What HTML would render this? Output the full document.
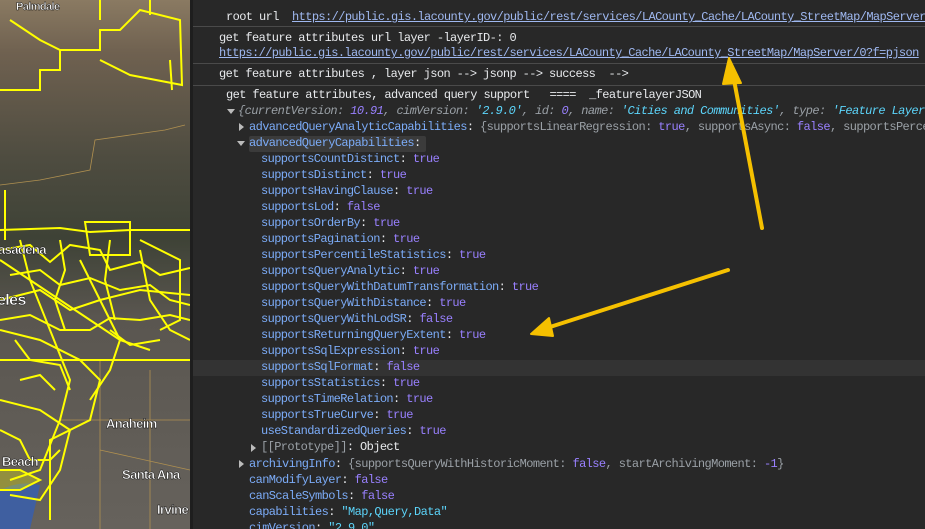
<!DOCTYPE html>
<html><head><meta charset="utf-8"><style>
*{margin:0;padding:0;box-sizing:border-box}
body{width:925px;height:529px;overflow:hidden;background:#282828;position:relative;font-family:"Liberation Mono",monospace;font-size:12px;letter-spacing:-0.6px;color:#e8eaed}
#map{position:absolute;left:0;top:0;width:190px;height:529px}
#split{position:absolute;left:190px;top:0;width:3px;height:529px;background:#1e1e1e}
#con{position:absolute;left:193px;top:0;width:732px;height:529px;overflow:hidden}
.l{position:absolute;white-space:pre;height:16px;line-height:16px}
.sep{position:absolute;left:0;right:0;height:1px;background:#4a4a4a}
.k{color:#7cacf8}.v{color:#9980ff}.s{color:#5cd5fb}.g{color:#9aa0a6}.i{font-style:italic}
a{color:#9fb8f0;text-decoration:underline}
.t{position:absolute;width:0;height:0}
.tr{border-top:4px solid transparent;border-bottom:4px solid transparent;border-left:5px solid #bbb}
.td{border-left:4px solid transparent;border-right:4px solid transparent;border-top:5px solid #bbb}
</style></head><body>
<svg id="map" viewBox="0 0 190 529" xmlns="http://www.w3.org/2000/svg">
<defs><linearGradient id="bg" x1="0" y1="0" x2="0" y2="1">
<stop offset="0" stop-color="#8a7a62"/><stop offset="0.1" stop-color="#6f6150"/><stop offset="0.3" stop-color="#4e4c40"/><stop offset="0.45" stop-color="#3e4236"/><stop offset="0.6" stop-color="#5a5650"/><stop offset="1" stop-color="#66625c"/></linearGradient></defs>
<rect width="190" height="529" fill="url(#bg)"/>
<path d="M0 490 Q20 480 40 485 L30 529 L0 529Z" fill="#3f5fa0"/>
<g fill="none" stroke="#b09050" stroke-width="0.8">
<path d="M0 185 L40 180 L90 170 L95 140 L130 135 L165 130 L185 125"/>
<path d="M100 360 L100 529 M150 370 L150 529 M60 420 L190 420 M100 450 L190 470"/>
</g>
<g fill="none" stroke="#ffff00" stroke-width="2">
<path d="M0 90 L40 90 L40 70 L60 70 L60 50 L100 50 L100 30 L120 30 L140 10 L180 20 L182 85 L130 75 L100 60"/>
<path d="M10 20 L40 40 L60 50 M100 0 L100 20 M150 0 L150 15 M170 60 L172 90"/>
<path d="M0 230 L60 228 L90 232 L130 230 L190 230 M85 222 L130 222 L130 255 L90 255Z"/>
<path d="M0 360 L190 360 M0 260 L60 300 L90 320 L120 340 L150 350 M0 300 L40 290 L70 310 L100 300 L140 290 L190 295"/>
<path d="M20 240 L30 280 L50 330 L70 380 L60 420 L40 470 L10 480 M80 260 L100 300 L120 340 L110 370 L90 400 M140 250 L150 300 L170 330 L190 340"/>
<path d="M5 190 L5 240 M0 330 L40 340 L80 360 L100 380 L90 420 L50 440 L50 520 M140 240 L180 260 L180 320 L160 330"/>
<path d="M0 400 L40 410 L70 430 L60 470 L40 500 L10 495"/>
<path d="M0 250 L30 245 L50 262 L70 245 L100 250 L110 270 L140 262 L160 275 L190 268"/>
<path d="M10 275 L40 270 L60 285 L90 278 L120 290 L150 285 L170 300 L190 305"/>
<path d="M0 320 L30 315 L60 330 L90 330 L110 318 L140 320 L170 315 L190 320"/>
<path d="M15 340 L30 360 L60 365 L70 390 M110 330 L130 345 L160 340 M60 240 L65 270 L55 300 L65 330 M110 240 L105 280 L115 320"/>
<path d="M0 430 L20 440 L30 460 L50 460 L60 450 M20 380 L40 375 L55 390"/>
<path d="M0 470 L20 470 L40 480 L20 490 L0 490" fill="#ffff00" fill-opacity="0.3"/>
</g>
<g font-family="Liberation Sans,sans-serif" font-weight="bold" fill="#fff" stroke="#000" stroke-width="0.4">
<text x="16" y="10" font-size="11">Palmdale</text>
<text x="-2" y="254" font-size="13">asadena</text>
<text x="-3" y="305" font-size="16">eles</text>
<text x="106" y="428" font-size="13">Anaheim</text>
<text x="122" y="479" font-size="13">Santa Ana</text>
<text x="2" y="466" font-size="13">Beach</text>
<text x="157" y="514" font-size="13">Irvine</text>
</g>
</svg>
<div id="split"></div>
<div id="con">
<div class="l" style="left:33px;top:9px">root url  <a>https://public.gis.lacounty.gov/public/rest/services/LACounty_Cache/LACounty_StreetMap/MapServer</a></div>
<div class="sep" style="top:26px"></div>
<div class="l" style="left:26px;top:30px">get feature attributes url layer -layerID-: 0</div>
<div class="l" style="left:26px;top:45px"><a>https://public.gis.lacounty.gov/public/rest/services/LACounty_Cache/LACounty_StreetMap/MapServer/0?f=pjson</a></div>
<div class="sep" style="top:63px"></div>
<div class="l" style="left:26px;top:66px">get feature attributes , layer json --&gt; jsonp --&gt; success  --&gt;</div>
<div class="sep" style="top:85px"></div>
<div class="l" style="left:33px;top:87px">get feature attributes, advanced query support   ====  _featurelayerJSON</div>
<div class="t td" style="left:34px;top:109px"></div>
<div class="l i" style="left:45px;top:103px"><span class="g">{currentVersion: </span><span class="v">10.91</span><span class="g">, cimVersion: </span><span class="s">'2.9.0'</span><span class="g">, id: </span><span class="v">0</span><span class="g">, name: </span><span class="s">'Cities and Communities'</span><span class="g">, type: </span><span class="s">'Feature Layer'</span></div>
<div class="t tr" style="left:46px;top:123px"></div>
<div class="l" style="left:56px;top:119px"><span class="k">advancedQueryAnalyticCapabilities</span>: <span class="g">{supportsLinearRegression: </span><span class="v">true</span><span class="g">, supportsAsync: </span><span class="v">false</span><span class="g">, supportsPercentileAnalytic</span></div>
<div class="t td" style="left:44px;top:141px"></div>
<div style="position:absolute;left:56px;top:136px;width:177px;height:16px;background:#3b3b3b;border-radius:2px"></div>
<div class="l" style="left:56px;top:135px"><span class="k">advancedQueryCapabilities</span>:</div>
<div style="position:absolute;left:0;top:360px;right:0;height:16px;background:#333"></div>
<div class="l" style="left:68px;top:151px"><span class="k">supportsCountDistinct</span>: <span class="v">true</span>
<span class="k">supportsDistinct</span>: <span class="v">true</span>
<span class="k">supportsHavingClause</span>: <span class="v">true</span>
<span class="k">supportsLod</span>: <span class="v">false</span>
<span class="k">supportsOrderBy</span>: <span class="v">true</span>
<span class="k">supportsPagination</span>: <span class="v">true</span>
<span class="k">supportsPercentileStatistics</span>: <span class="v">true</span>
<span class="k">supportsQueryAnalytic</span>: <span class="v">true</span>
<span class="k">supportsQueryWithDatumTransformation</span>: <span class="v">true</span>
<span class="k">supportsQueryWithDistance</span>: <span class="v">true</span>
<span class="k">supportsQueryWithLodSR</span>: <span class="v">false</span>
<span class="k">supportsReturningQueryExtent</span>: <span class="v">true</span>
<span class="k">supportsSqlExpression</span>: <span class="v">true</span>
<span class="k">supportsSqlFormat</span>: <span class="v">false</span>
<span class="k">supportsStatistics</span>: <span class="v">true</span>
<span class="k">supportsTimeRelation</span>: <span class="v">true</span>
<span class="k">supportsTrueCurve</span>: <span class="v">true</span>
<span class="k">useStandardizedQueries</span>: <span class="v">true</span>
<span class="g">[[Prototype]]</span>: Object</div>
<div class="t tr" style="left:58px;top:444px"></div>
<div class="t tr" style="left:46px;top:460px"></div>
<div class="l" style="left:56px;top:456px"><span class="k">archivingInfo</span>: <span class="g">{supportsQueryWithHistoricMoment: </span><span class="v">false</span><span class="g">, startArchivingMoment: </span><span class="v">-1</span><span class="g">}</span>
<span class="k">canModifyLayer</span>: <span class="v">false</span>
<span class="k">canScaleSymbols</span>: <span class="v">false</span>
<span class="k">capabilities</span>: <span class="s">"Map,Query,Data"</span>
<span class="k">cimVersion</span>: <span class="s">"2.9.0"</span></div>
</div>
<svg style="position:absolute;left:0;top:0" width="925" height="529" xmlns="http://www.w3.org/2000/svg">
<g stroke="#f5c000" stroke-width="4" fill="#f5c000" stroke-linecap="round">
<line x1="762" y1="228" x2="734" y2="80"/>
<polygon points="729,58 741,83 723,84" stroke-width="2" stroke-linejoin="round"/>
<line x1="728" y1="270" x2="550" y2="327"/>
<polygon points="531,334 549,318 553,336" stroke-width="2" stroke-linejoin="round"/>
</g></svg>
</body></html>
